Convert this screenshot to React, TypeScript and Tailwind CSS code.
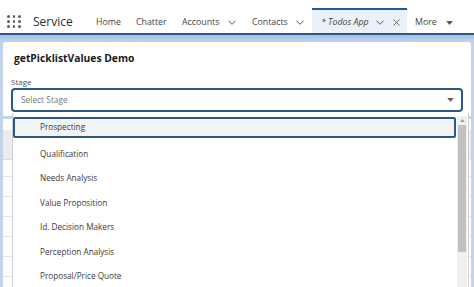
import { FC } from 'react';

const stages = [
    'Prospecting',
    'Qualification',
    'Needs Analysis',
    'Value Proposition',
    'Id. Decision Makers',
    'Perception Analysis',
    'Proposal/Price Quote',
];

const Chevron: FC<{ className?: string }> = ({ className }) => (
    <svg viewBox="0 0 8 5" className={className} fill="none" stroke="currentColor" strokeWidth="1">
        <path d="M0.5 0.8 4 4.3 7.5 0.8" />
    </svg>
);

const Caret: FC<{ className?: string }> = ({ className }) => (
    <svg viewBox="0 0 10 6" className={className} fill="currentColor">
        <path d="M0 0h10L5 6z" />
    </svg>
);

const Waffle = () => (
    <div className="grid grid-cols-3 gap-x-[2.7px] gap-y-[2.3px] w-[14px]">
        {Array.from({ length: 9 }).map((_, i) => (
            <span key={i} className="w-[2.8px] h-[2.8px] rounded-full bg-[#5d5d5d]" />
        ))}
    </div>
);

const NavBar: FC = () => (
    <div className="h-[35px] shrink-0 bg-white border-b-2 border-[#1f5a9a] flex items-stretch text-[8.8px] text-[#444] whitespace-nowrap">
        <div className="w-[33px] shrink-0 flex items-center pl-[7px] pt-[10px]">
            <Waffle />
        </div>
        <div className="w-[63px] shrink-0 flex items-center pt-[11px] text-[12px] text-[#2e2e2e]">Service</div>
        <div className="w-[40px] shrink-0 flex items-center pt-[12px]">Home</div>
        <div className="w-[46px] shrink-0 flex items-center pt-[12px]">Chatter</div>
        <div className="w-[70px] shrink-0 flex items-center pt-[12px]">
            <span className="w-[46px]">Accounts</span>
            <Chevron className="w-[8px] h-[5px] text-[#555]" />
        </div>
        <div className="w-[60px] shrink-0 flex items-center pt-[12px]">
            <span className="w-[44px]">Contacts</span>
            <Chevron className="w-[8px] h-[5px] text-[#555]" />
        </div>
        <div className="w-[95px] shrink-0 flex items-center pl-[9px] pt-[2px] mt-[8px] bg-[#eaf1f9] border-t-[2.5px] border-[#1f5a9a]">
            <span className="w-[55px] italic">* Todos App</span>
            <Chevron className="w-[8px] h-[5px] text-[#555]" />
            <svg viewBox="0 0 8 8" className="ml-[9px] w-[7px] h-[7px] text-[#555]" stroke="currentColor" strokeWidth="1">
                <path d="M0.5 0.5l7 7M7.5 0.5l-7 7" />
            </svg>
        </div>
        <div className="flex items-center pl-[8px] pt-[12px]">
            <span className="w-[31px]">More</span>
            <Caret className="w-[7px] h-[4px] text-[#555]" />
        </div>
    </div>
);

const TableCard: FC = () => (
    <div className="mx-[3px] mt-[3px] bg-white flex-1 min-h-0 overflow-hidden">
        <div className="h-[11px]" />
        <div className="h-[30px] bg-[#ececec] border-b border-[#dddddd]" />
        <div className="h-[17px] border-b border-[#e3e3e3]" />
        {Array.from({ length: 6 }).map((_, i) => (
            <div key={i} className="h-[20px] border-b border-[#e3e3e3]" />
        ))}
    </div>
);

export default function App() {
    return (
        <div
            className="relative w-[474px] h-[287px] overflow-hidden bg-[#c3d3e8] flex flex-col"
            style={{ fontFamily: '"Open Sans", "Noto Sans", sans-serif' }}
        >
            <NavBar />
            <div className="h-[7px] shrink-0 bg-gradient-to-b from-[#a9bfdc] to-[#c3d3e8]" />
            <div className="mx-[3px] shrink-0 bg-white rounded-t-[3px] pt-[9px] px-[8px] pb-[4px]">
                <h1 className="text-[10.3px] font-bold text-[#1a1a1a] pl-[3px] leading-[14px]">getPicklistValues Demo</h1>
                <div className="mt-[11px] text-[8px] text-[#555] leading-[11px]">Stage</div>
                <div className="mt-[1px] h-[24px] border-2 border-[#2b5784] rounded-[4px] flex items-center justify-between pl-[8px] pr-[7px]">
                    <span className="text-[8.4px] text-[#777]">Select Stage</span>
                    <Caret className="w-[7px] h-[4px] text-[#666]" />
                </div>
            </div>
            <TableCard />

            <div className="absolute left-[12px] top-[113px] w-[457px] h-[180px] bg-white border-x border-[#cfcfcf] flex">
                <div className="flex-1 pt-[4px] pr-[1px]">
                    {stages.map((s, i) => (
                        <div
                            key={s}
                            className={
                                i === 0
                                    ? 'h-[21px] flex items-center pl-[25px] bg-[#f3f3f3] border-2 border-[#2b5784] rounded-[2px] text-[8.2px] text-[#3a3a3a] mb-[3.5px]'
                                    : 'h-[24.5px] flex items-center pl-[27px] text-[8.2px] text-[#3a3a3a]'
                            }
                        >
                            {s}
                        </div>
                    ))}
                </div>
                <div className="w-[10px] mt-[3px] mr-[1px] flex flex-col bg-[#f0f0f0]">
                    <div className="h-[9px] flex items-center justify-center">
                        <svg viewBox="0 0 6 4" className="w-[5px] h-[3px] text-[#999]" fill="currentColor">
                            <path d="M3 0 6 4H0z" />
                        </svg>
                    </div>
                    <div className="mx-[1px] h-[127px] bg-[#c1c1c1]" />
                </div>
            </div>
        </div>
    );
}
